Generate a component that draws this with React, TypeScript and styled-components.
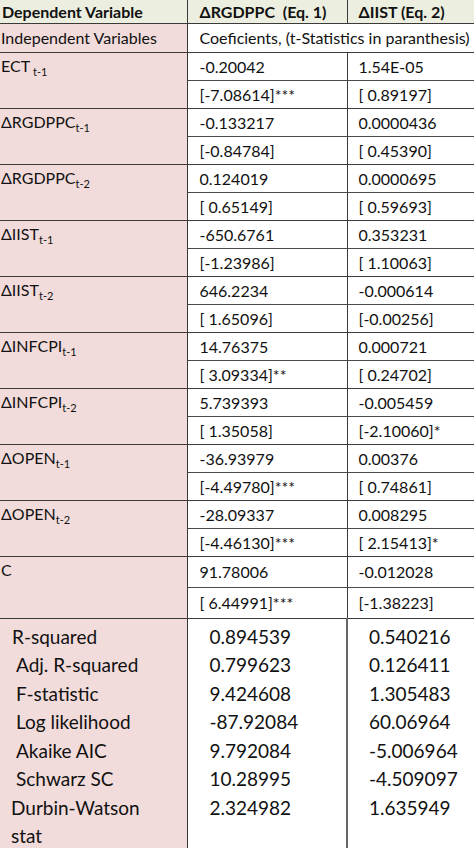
import { Fragment } from 'react';
import styled, { createGlobalStyle } from 'styled-components';

const GlobalStyle = createGlobalStyle`
  html, body {
    margin: 0;
    padding: 0;
    background: #ffffff;
  }
  body {
    font-family: Lato, "Open Sans", sans-serif;
    color: #111111;
  }
`;

const Table = styled.table`
  border-collapse: collapse;
  table-layout: fixed;
  width: 474px;
  font-size: 16px;
`;

const Col = styled.col<{ $w: number }>`
  width: ${(p) => p.$w}px;
`;

const HeadRow = styled.tr`
  height: 23px;
  background: #eceedf;
`;

const HeadCell = styled.td<{ $pad: number }>`
  font-weight: 700;
  text-align: left;
  font-size: 16px;
  padding: 0 0 0 ${(p) => p.$pad}px;
  border-bottom: 1.5px solid #3a3a3a;
  border-right: 1.5px solid #3a3a3a;
  white-space: nowrap;
  &:last-child {
    border-right: none;
  }
`;

const Row = styled.tr<{ $h: number }>`
  height: ${(p) => p.$h}px;
`;

const LabelCell = styled.td<{ $middle?: boolean }>`
  background: #f2dcdb;
  vertical-align: ${(p) => (p.$middle ? 'middle' : 'top')};
  padding: ${(p) => (p.$middle ? '0' : '3px')} 0 0 1px;
  border-bottom: 1.5px solid #3a3a3a;
  border-right: 1.5px solid #3a3a3a;
  white-space: nowrap;
`;

const NoteCell = styled.td`
  padding: 0 0 0 12px;
  border-bottom: 1.5px solid #3a3a3a;
  white-space: nowrap;
  overflow: visible;
`;

const ValueCell = styled.td<{ $pad: number; $last?: boolean }>`
  padding: 0 0 0 ${(p) => p.$pad}px;
  border-bottom: ${(p) => (p.$last ? '1.5px solid #3a3a3a' : '1px solid #4a4a4a')};
  border-right: 1.5px solid #3a3a3a;
  white-space: nowrap;
  &:last-child {
    border-right: none;
  }
`;

const Sub = styled.sub`
  font-size: 11px;
  vertical-align: -4px;
  line-height: 0;
`;

const StatRow = styled.tr`
  height: 28.5px;
  font-size: 19px;
`;

const StatLabel = styled.td<{ $pad: number }>`
  background: #f2dcdb;
  border-right: 1.5px solid #3a3a3a;
  padding: 0 0 0 ${(p) => p.$pad}px;
  vertical-align: top;
  line-height: 28.5px;
  white-space: nowrap;
`;

const StatValue = styled.td<{ $pad: number }>`
  padding: 0 0 0 ${(p) => p.$pad}px;
  border-right: 2px solid #666666;
  vertical-align: top;
  line-height: 28.5px;
  &:last-child {
    border-right: none;
  }
`;

const FirstStat = styled(StatRow)`
  td {
    padding-top: 4px;
  }
`;

type Coef = {
  name: string;
  sub?: string;
  spaced?: boolean;
  a: [string, string];
  b: [string, string];
  h?: number;
};

const coefs: Coef[] = [
  { name: 'ECT', sub: 't-1', spaced: true, a: ['-0.20042', '[-7.08614]***'], b: ['1.54E-05', '[ 0.89197]'] },
  { name: 'ΔRGDPPC', sub: 't-1', a: ['-0.133217', '[-0.84784]'], b: ['0.0000436', '[ 0.45390]'] },
  { name: 'ΔRGDPPC', sub: 't-2', a: ['0.124019', '[ 0.65149]'], b: ['0.0000695', '[ 0.59693]'] },
  { name: 'ΔIIST', sub: 't-1', a: ['-650.6761', '[-1.23986]'], b: ['0.353231', '[ 1.10063]'] },
  { name: 'ΔIIST', sub: 't-2', a: ['646.2234', '[ 1.65096]'], b: ['-0.000614', '[-0.00256]'] },
  { name: 'ΔINFCPI', sub: 't-1', a: ['14.76375', '[ 3.09334]**'], b: ['0.000721', '[ 0.24702]'] },
  { name: 'ΔINFCPI', sub: 't-2', a: ['5.739393', '[ 1.35058]'], b: ['-0.005459', '[-2.10060]*'] },
  { name: 'ΔOPEN', sub: 't-1', a: ['-36.93979', '[-4.49780]***'], b: ['0.00376', '[ 0.74861]'] },
  { name: 'ΔOPEN', sub: 't-2', a: ['-28.09337', '[-4.46130]***'], b: ['0.008295', '[ 2.15413]*'] },
  { name: 'C', a: ['91.78006', '[ 6.44991]***'], b: ['-0.012028', '[-1.38223]'], h: 31 },
];

const stats: { label: string; pad: number; a: string; b: string }[] = [
  { label: 'Adj. R-squared', pad: 16, a: '0.799623', b: '0.126411' },
  { label: 'F-statistic', pad: 16, a: '9.424608', b: '1.305483' },
  { label: 'Log likelihood', pad: 16, a: '-87.92084', b: '60.06964' },
  { label: 'Akaike AIC', pad: 16, a: '9.792084', b: '-5.006964' },
  { label: 'Schwarz SC', pad: 16, a: '10.28995', b: '-4.509097' },
];

export default function App() {
  return (
    <>
      <GlobalStyle />
      <Table>
        <colgroup>
          <Col $w={187} />
          <Col $w={160} />
          <Col $w={127} />
        </colgroup>
        <tbody>
          <HeadRow>
            <HeadCell $pad={2}>Dependent Variable</HeadCell>
            <HeadCell $pad={12}>ΔRGDPPC&nbsp;&nbsp;(Eq. 1)</HeadCell>
            <HeadCell $pad={11}>ΔIIST (Eq. 2)</HeadCell>
          </HeadRow>
          <Row $h={29}>
            <LabelCell $middle>Independent Variables</LabelCell>
            <NoteCell colSpan={2}>Coeficients, (t-Statistics in paranthesis)</NoteCell>
          </Row>
          {coefs.map((c, i) => (
            <Fragment key={i}>
              <Row $h={c.h ?? 28}>
                <LabelCell rowSpan={2}>
                  {c.name}
                  {c.sub && (
                    <Sub>
                      {c.spaced ? ' ' : ''}
                      {c.sub}
                    </Sub>
                  )}
                </LabelCell>
                <ValueCell $pad={12}>{c.a[0]}</ValueCell>
                <ValueCell $pad={11}>{c.b[0]}</ValueCell>
              </Row>
              <Row $h={c.h ?? 28}>
                <ValueCell $pad={12} $last>
                  {c.a[1]}
                </ValueCell>
                <ValueCell $pad={11} $last>
                  {c.b[1]}
                </ValueCell>
              </Row>
            </Fragment>
          ))}
          <FirstStat>
            <StatLabel $pad={12}>R-squared</StatLabel>
            <StatValue $pad={22}>0.894539</StatValue>
            <StatValue $pad={21}>0.540216</StatValue>
          </FirstStat>
          {stats.map((s) => (
            <StatRow key={s.label}>
              <StatLabel $pad={s.pad}>{s.label}</StatLabel>
              <StatValue $pad={22}>{s.a}</StatValue>
              <StatValue $pad={21}>{s.b}</StatValue>
            </StatRow>
          ))}
          <StatRow>
            <StatLabel $pad={11}>
              Durbin-Watson
              <br />
              stat
            </StatLabel>
            <StatValue $pad={22}>2.324982</StatValue>
            <StatValue $pad={21}>1.635949</StatValue>
          </StatRow>
        </tbody>
      </Table>
    </>
  );
}
